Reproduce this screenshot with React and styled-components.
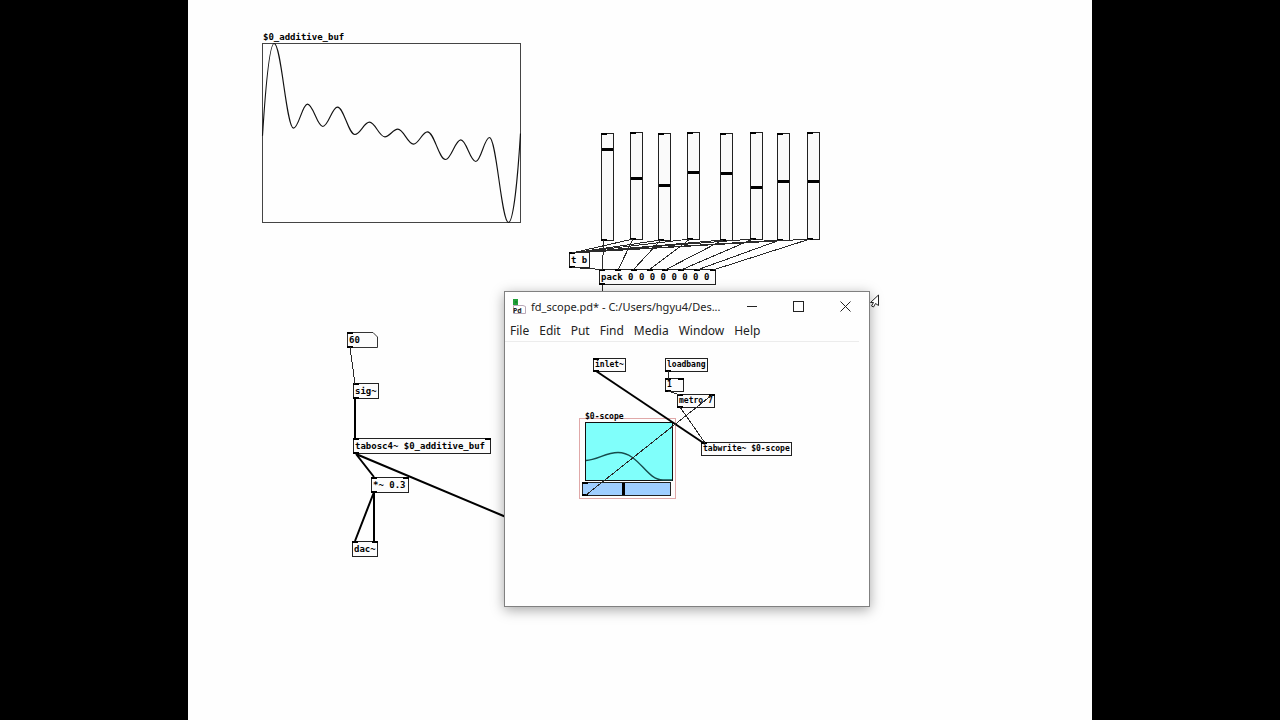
import React from "react";
import styled, { createGlobalStyle } from "styled-components";

const GlobalStyle = createGlobalStyle`
  * {
    box-sizing: border-box;
  }
  body {
    margin: 0;
    background: #000000;
  }
`;

const Screen = styled.main`
  display: grid;
  grid-template-columns: 188px 1fr 188px;
  min-height: 100vh;
  background: #000000;
`;

const Patch = styled.section`
  grid-column: 2;
  position: relative;
  overflow: hidden;
  background: #fefefe;
  color: #000000;
  font-family: "DejaVu Sans Mono", monospace;
  font-weight: 700;
  font-size: 9px;
`;

const Wires = styled.svg`
  position: absolute;
  top: 0;
  left: 0;
  width: 100%;
  height: 100%;
  pointer-events: none;
  fill: none;
  stroke: #2a2a2a;
  shape-rendering: crispEdges;
`;

const SignalWire = styled.path`
  stroke: #000000;
  stroke-width: 2;
  shape-rendering: auto;
`;

const Placed = styled.div`
  position: absolute;
  left: ${({ $x }) => $x}px;
  top: ${({ $y }) => $y}px;
`;

const ObjectBox = styled(Placed)`
  display: flex;
  flex-direction: column;
  width: ${({ $w }) => $w}px;
  height: ${({ $h }) => $h || 16}px;
  background: #fcfcfc;
  box-shadow: inset 0 0 0 1px #222222;
  line-height: ${({ $h }) => ($h || 16) - 4}px;
  white-space: pre;
`;

const ObjectText = styled.span`
  flex: 1;
  padding-left: 2px;
`;

const Ports = styled.span`
  display: flex;
  flex: none;
  justify-content: space-between;
  height: 2px;
`;

const Port = styled.i`
  width: 6px;
  background: #000000;
`;

const NumberBox = styled(ObjectBox)`
  isolation: isolate;
  background: none;
  box-shadow: none;
`;

const NumberOutline = styled.svg`
  position: absolute;
  inset: 0;
  z-index: -1;
  fill: #fcfcfc;
  stroke: #333333;
`;

const NumberField = styled.input`
  flex: 1;
  width: 24px;
  min-height: 0;
  padding: 0 0 0 2px;
  border: none;
  outline: none;
  background: transparent;
  color: inherit;
  font: inherit;
`;

const SliderBox = styled(Placed)`
  display: flex;
  flex-direction: column;
  width: ${({ $w }) => $w}px;
  height: ${({ $h }) => $h}px;
  background: ${({ $fill }) => $fill || "#fafafa"};
  box-shadow: inset 0 0 0 1px #222222;
`;

const Range = styled.input`
  appearance: none;
  flex: 1;
  width: 100%;
  min-height: 0;
  margin: 0;
  background: transparent;
  ${({ $vertical }) =>
    $vertical && "writing-mode: vertical-lr; direction: rtl;"}

  &::-webkit-slider-thumb {
    appearance: none;
    width: ${({ $vertical }) => ($vertical ? 11 : 3)}px;
    height: ${({ $vertical }) => ($vertical ? 3 : 12)}px;
    border: none;
    border-radius: 0;
    background: #000000;
  }
`;

const ArrayName = styled(Placed)`
  line-height: 12px;
  white-space: pre;
`;

const Plot = styled.svg`
  position: absolute;
  left: ${({ $x }) => $x}px;
  top: ${({ $y }) => $y}px;
  overflow: visible;
  fill: none;
  stroke: #111111;
`;

const GraphFrame = styled(Placed)`
  width: 97px;
  height: 81px;
  border: 1px solid #e0a8a8;
`;

const Window = styled(Placed)`
  width: 366px;
  border: 1px solid #808080;
  background: #fefefe;
  box-shadow: 0 3px 12px rgba(0, 0, 0, 0.35);
`;

const TitleBar = styled.header`
  display: flex;
  align-items: center;
  height: 29px;
  padding-left: 7px;
  color: #222222;
  font-family: "Noto Sans", sans-serif;
`;

const Title = styled.h1`
  flex: 1;
  min-width: 0;
  margin: 0 0 0 4px;
  font-size: 11px;
  font-weight: 400;
  white-space: nowrap;
`;

const CaptionButton = styled.button`
  display: flex;
  flex: none;
  align-items: center;
  justify-content: center;
  width: 47px;
  height: 29px;
  padding: 0;
  border: none;
  background: transparent;
`;

const MenuBar = styled.nav`
  display: flex;
  gap: 10px;
  height: 21px;
  margin-right: 10px;
  padding-left: 5px;
  border-bottom: 1px solid #ececec;
`;

const MenuButton = styled.button`
  padding: 0;
  border: none;
  background: transparent;
  color: #222222;
  font-family: "Noto Sans", sans-serif;
  font-size: 12px;
  line-height: 20px;
`;

const WindowCanvas = styled.div`
  position: relative;
  height: 264px;
  font-size: 8px;
`;

const Cursor = styled.svg`
  position: absolute;
  left: 681px;
  top: 294px;
  fill: #ffffff;
  stroke: #222222;
`;

// turning points of the additive wave, in thirds of a pixel
const WAVE = [
  [35, 0],
  [93, 254],
  [135, 182],
  [181, 249],
  [225, 191],
  [277, 273],
  [321, 236],
  [367, 280],
  [406, 257],
  [453, 302],
  [495, 265],
  [549, 348],
  [595, 289],
  [640, 354],
  [681, 282],
  [738, 537],
];

const wavePath = () => {
  let d = "M0 277C8 150 20 0 35 0";
  for (let i = 1; i < WAVE.length; i++) {
    const [x0, y0] = WAVE[i - 1];
    const [x1, y1] = WAVE[i];
    const bend = (x1 - x0) * 0.37;
    d += `C${x0 + bend} ${y0} ${x1 - bend} ${y1} ${x1} ${y1}`;
  }
  return `${d}C753 537 766 400 774 270`;
};

const SLIDERS = [
  { x: 413, y: 133, value: 111, inlet: 414 },
  { x: 442, y: 132, value: 73, inlet: 430 },
  { x: 470, y: 133, value: 65, inlet: 445 },
  { x: 499, y: 132, value: 80, inlet: 461 },
  { x: 532, y: 133, value: 80, inlet: 477 },
  { x: 562, y: 132, value: 62, inlet: 493 },
  { x: 589, y: 133, value: 70, inlet: 509 },
  { x: 619, y: 132, value: 69, inlet: 525 },
];

const MENUS = ["File", "Edit", "Put", "Find", "Media", "Window", "Help"];

const PortRow = ({ count }) => (
  <Ports>
    {Array.from({ length: count }, (_, i) => (
      <Port key={i} />
    ))}
  </Ports>
);

const PdObject = ({ x, y, w, h, inlets = 1, outlets = 1, children }) => (
  <ObjectBox $x={x} $y={y} $w={w} $h={h}>
    <PortRow count={inlets} />
    <ObjectText>{children}</ObjectText>
    <PortRow count={outlets} />
  </ObjectBox>
);

const PdSlider = ({ x, y, w, h, fill, label, value, vertical }) => (
  <SliderBox $x={x} $y={y} $w={w} $h={h} $fill={fill}>
    <PortRow count={1} />
    <Range
      $vertical={vertical}
      type="range"
      aria-label={label}
      min="0"
      max="127"
      defaultValue={value}
    />
    <PortRow count={1} />
  </SliderBox>
);

const ScopeWindow = () => (
  <Window $x={316} $y={291}>
    <TitleBar>
      <svg width="15" height="16" viewBox="0 0 15 16" aria-hidden="true">
        <path d="M1.5 6.5H11l2.5 1v7h-12z" fill="#ffffff" stroke="#b9a9b9" />
        <rect x="1" y="0" width="5" height="6" fill="#20a038" />
        <path d="M3 3h2" stroke="#0b6b1d" />
        <text x="1" y="14" fontSize="7" fontWeight="700" fill="#222222">
          Pd
        </text>
      </svg>
      <Title>fd_scope.pd* - C:/Users/hgyu4/Des...</Title>
      <CaptionButton aria-label="Minimize">
        <svg width="10" height="10" stroke="#222222">
          <path d="M0 4.5h10" />
        </svg>
      </CaptionButton>
      <CaptionButton aria-label="Maximize">
        <svg width="11" height="11" fill="none" stroke="#222222">
          <rect x="0.5" y="0.5" width="10" height="10" />
        </svg>
      </CaptionButton>
      <CaptionButton aria-label="Close">
        <svg width="11" height="11" stroke="#222222">
          <path d="M0.5 0.5l10 10M10.5 0.5l-10 10" />
        </svg>
      </CaptionButton>
    </TitleBar>
    <MenuBar>
      {MENUS.map((name) => (
        <MenuButton key={name}>{name}</MenuButton>
      ))}
    </MenuBar>
    <WindowCanvas>
      <PdObject x={88} y={16} w={33} h={14}>
        inlet~
      </PdObject>
      <PdObject x={160} y={16} w={43} h={14} inlets={0}>
        loadbang
      </PdObject>
      <PdObject x={160} y={36} w={19} h={14} inlets={2}>
        1
      </PdObject>
      <PdObject x={172} y={52} w={38} h={14} inlets={2}>
        metro 7
      </PdObject>
      <PdObject x={196} y={100} w={91} h={14} outlets={0}>
        tabwrite~ $0-scope
      </PdObject>
      <GraphFrame $x={74} $y={76} />
      <ArrayName $x={80} $y={69}>
        $0-scope
      </ArrayName>
      <Plot $x={80} $y={80} width="89" height="59">
        <rect x="0.5" y="0.5" width="87" height="58" fill="#80fffb" />
        <path
          d="M1 38.5C12 38 21 30.5 33 30.5C54 30.5 61 58 78 58H87"
          stroke="#164c4c"
          strokeWidth="1.4"
        />
      </Plot>
      <PdSlider
        x={77}
        y={140}
        w={89}
        h={14}
        fill="#9fceff"
        label="Scope trigger"
        value={59}
      />
      <Wires>
        <SignalWire d="M91 29L200 102" />
        <path d="M163.5 29v8M163 49l12 4M175 65l25 36M81 153L207 53" />
      </Wires>
    </WindowCanvas>
  </Window>
);

const App = () => (
  <Screen>
    <GlobalStyle />
    <Patch>
      <ArrayName $x={75} $y={31}>
        $0_additive_buf
      </ArrayName>
      <Plot $x={74} $y={43} width="259" height="180">
        <rect x="0.5" y="0.5" width="258" height="179" stroke="#444444" />
        <path
          d={wavePath()}
          transform="translate(0.5 0.5) scale(0.3333)"
          strokeWidth="3.4"
        />
      </Plot>

      {SLIDERS.map(({ x, y, value }, i) => (
        <PdSlider
          key={x}
          vertical
          x={x}
          y={y}
          w={13}
          h={108}
          label={`Harmonic ${i + 1}`}
          value={value}
        />
      ))}

      <PdObject x={381} y={252} w={21}>
        t b
      </PdObject>
      <PdObject x={411} y={269} w={117} inlets={8}>
        pack 0 0 0 0 0 0 0 0
      </PdObject>

      <NumberBox $x={159} $y={332} $w={31}>
        <NumberOutline width="31" height="16">
          <path d="M0.5 0.5H26L30.5 5V15.5H0.5z" />
        </NumberOutline>
        <PortRow count={1} />
        <NumberField aria-label="Note" defaultValue="60" />
        <PortRow count={1} />
      </NumberBox>
      <PdObject x={165} y={383} w={26}>
        sig~
      </PdObject>
      <PdObject x={165} y={438} w={138} inlets={2}>
        tabosc4~ $0_additive_buf
      </PdObject>
      <PdObject x={183} y={477} w={38} inlets={2}>
        *~ 0.3
      </PdObject>
      <PdObject x={164} y={541} w={26} inlets={2} outlets={0}>
        dac~
      </PdObject>

      <Wires>
        {SLIDERS.map(({ x, y, inlet }) => (
          <path key={x} d={`M${x + 3} ${y + 107}L${inlet} 270`} />
        ))}
        {SLIDERS.slice(1).map(({ x, y }) => (
          <path key={x} d={`M${x + 3} ${y + 107}L384 253`} />
        ))}
        <path d="M384 267.5L414 269.5M414.5 285v8M162 347l5 37" />
        <SignalWire d="M167 399v39M168 454l18 23M168 454l150 63M186 492l-19 49M186 492v49" />
      </Wires>

      <ScopeWindow />

      <Cursor width="12" height="15">
        <path d="M9.5 1L1.5 8.5L4.5 8.5L2.5 12L4.5 13L6.5 9.5L9.5 11.5z" />
      </Cursor>
    </Patch>
  </Screen>
);

export default App;
